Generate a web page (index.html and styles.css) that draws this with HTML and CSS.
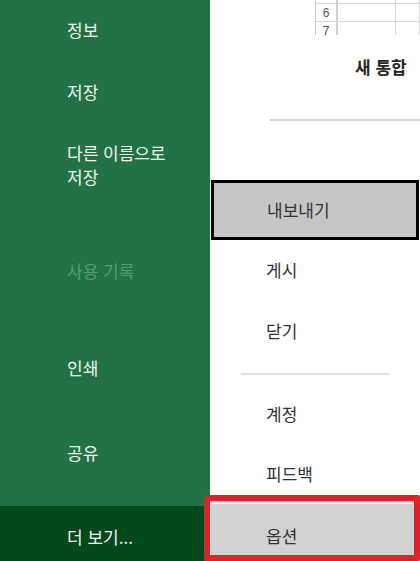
FILE: index.html
```html
<!DOCTYPE html>
<html lang="ko">
<head>
    <meta charset="UTF-8">
    <meta name="viewport" content="width=device-width, initial-scale=1.0">
    <title>Excel 더 보기</title>
    <link rel="stylesheet" href="styles.css">
</head>
<body>

    <div class="backstage">
        <nav class="nav">
            <div class="nav-item first">정보</div>
            <div class="nav-item save">저장</div>
            <div class="nav-item save-as">다른 이름으로<br>저장</div>
            <div class="nav-item disabled history">사용 기록</div>
            <div class="nav-item print">인쇄</div>
            <div class="nav-item share">공유</div>
            <div class="nav-more">더 보기...</div>
        </nav>

        <main class="panel">
            <div class="sheet-thumb">
                <div class="sheet-grid">
                    <div class="rh"></div><div class="cell"></div><div class="cell"></div>
                    <div class="rh">6</div><div class="cell"></div><div class="cell"></div>
                    <div class="rh">7</div><div class="cell"></div><div class="cell"></div>
                </div>
            </div>
            <div class="template-title">새 통합</div>
            <div class="panel-rule"></div>

            <div class="more-menu">
                <div class="menu-item focused">내보내기</div>
                <div class="menu-item publish">게시</div>
                <div class="menu-item close">닫기</div>
                <div class="menu-sep"></div>
                <div class="menu-item account">계정</div>
                <div class="menu-item feedback">피드백</div>
                <div class="menu-item selected">옵션</div>
            </div>
        </main>

        <!-- 강조 표시 -->
        <div class="highlight"></div>
    </div>

</body>
</html>
```

FILE: styles.css
```css
html, body {
    margin: 0;
    height: 100%;
    overflow: hidden;
}

body {
    font-family: "Noto Sans CJK KR", "Noto Sans", sans-serif;
    background-color: #fff;
}

.backstage {
    position: relative;
    display: flex;
    width: 420px;
    height: 561px;
}

/* 왼쪽 초록 메뉴 */
.nav {
    width: 210px;
    flex-shrink: 0;
    background-color: #217346;
    display: flex;
    flex-direction: column;
    color: #f4f4f4;
    font-size: 17px;
}

.nav-item {
    padding-left: 67px;
    line-height: 24px;
}

.nav-item.first { margin-top: 18px; }
.nav-item.save { margin-top: 38px; }
.nav-item.save-as { margin-top: 37px; }
.nav-item.history { margin-top: 70px; }
.nav-item.print { margin-top: 73px; }
.nav-item.share { margin-top: 61px; }

.nav-item.disabled {
    color: #58996f;
}

.nav-more {
    margin-top: auto;
    height: 55px;
    box-sizing: border-box;
    padding: 19px 0 0 67px;
    line-height: 24px;
    background-color: #024a1c;
}

/* 오른쪽 */
.panel {
    flex: 1;
    display: flex;
    flex-direction: column;
    color: #333;
}

.sheet-thumb {
    margin-left: 105px;
    height: 35px;
    overflow: hidden;
    border-left: 1px solid #c8c8c8;
}

.sheet-grid {
    margin-top: -14px;
    display: grid;
    grid-template-columns: 22px 58px 1fr;
    grid-auto-rows: 18px;
}

.rh, .cell {
    border-bottom: 1px solid #d8d8d8;
    border-right: 1px solid #d8d8d8;
}

.rh {
    border-right: 2px solid #d0d0d0;
    font-family: "Liberation Sans", Arial, sans-serif;
    font-size: 12px;
    line-height: 18px;
    color: #555;
    text-align: center;
}

.template-title {
    margin: 20px 0 0 145px;
    font-size: 17px;
    font-weight: bold;
    line-height: 24px;
    color: #262626;
    white-space: nowrap;
}

.panel-rule {
    margin: 40px 0 0 60px;
    height: 2px;
    background-color: #d2d2d2;
}

.more-menu {
    display: flex;
    flex-direction: column;
    font-size: 17px;
    color: #333;
}

.menu-item {
    padding-left: 56px;
    line-height: 24px;
}

.menu-item.focused {
    margin: 59px 1px 0 1px;
    height: 60px;
    box-sizing: border-box;
    border: 3px solid #000;
    background-color: #c6c6c6;
    padding-left: 53px;
    line-height: 54px;
}

.menu-item.publish { margin-top: 18px; }
.menu-item.close { margin-top: 37px; }

.menu-sep {
    margin: 30px 0 0 31px;
    width: 148px;
    height: 2px;
    background-color: #e3e3e3;
}

.menu-item.account { margin-top: 27px; }
.menu-item.feedback { margin-top: 36px; }

.menu-item.selected {
    margin: 18px 6px 0 1px;
    height: 51px;
    box-sizing: border-box;
    padding: 20px 0 0 55px;
    background-color: #d2d2d2;
}

.highlight {
    position: absolute;
    left: 204px;
    top: 495px;
    width: 216px;
    height: 66px;
    box-sizing: border-box;
    border: 6px solid #ed1c24;
    border-radius: 2px;
}
```
